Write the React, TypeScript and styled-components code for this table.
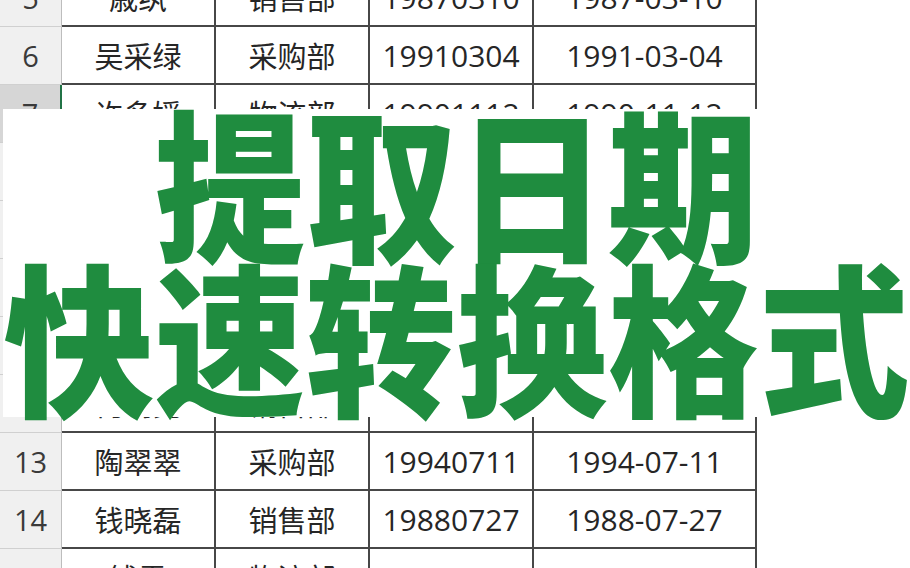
import React from "react";
import styled, { createGlobalStyle } from "styled-components";

const GlobalStyle = createGlobalStyle`
  html, body { margin: 0; padding: 0; background: #fff; overflow: hidden; }
  body { width: 910px; height: 568px; }
`;

const Stage = styled.div`
  position: relative;
  width: 910px;
  height: 568px;
  overflow: hidden;
  background: #fff;
`;

const Sheet = styled.div`
  margin-top: -31px;
  display: grid;
  grid-template-columns: 62px 154px 154px 164px 223px;
  grid-auto-rows: 58px;
  width: 757px;
`;

const RowHeader = styled.div<{ $active?: boolean }>`
  box-sizing: border-box;
  display: flex;
  align-items: center;
  justify-content: center;
  background: ${(p) => (p.$active ? "#d6d6d6" : "#f0f0f0")};
  border-bottom: 1px solid #d0d0d0;
  border-right: ${(p) => (p.$active ? "2px solid #217346" : "1px solid #bdbdbd")};
  font-family: "Open Sans", "Noto Sans", sans-serif;
  font-size: 29px;
  color: #3a3a3a;
`;

const Cell = styled.div<{ $num?: boolean }>`
  box-sizing: border-box;
  display: flex;
  align-items: center;
  justify-content: center;
  border-right: 2px solid #474747;
  border-bottom: 2px solid #474747;
  font-family: ${(p) => (p.$num ? `"Open Sans", "Noto Sans", sans-serif` : `"Noto Sans CJK SC", sans-serif`)};
  font-size: ${(p) => (p.$num ? "30px" : "29px")};
  color: #262626;
  white-space: nowrap;
`;

const Banner = styled.div`
  position: absolute;
  top: 109px;
  left: 3px;
  right: 0;
  height: 308px;
  box-sizing: border-box;
  padding-bottom: 14px;
  background: #fff;
  display: flex;
  flex-direction: column;
  align-items: center;
  justify-content: center;
`;

const TitleLine = styled.div`
  font-family: "Noto Sans CJK SC", sans-serif;
  font-weight: 900;
  font-size: 151px;
  line-height: 154px;
  color: #1f8c3f;
  white-space: nowrap;
  transform: scaleY(1.08);
`;

type Row = [number, string, string, string, string];

const rows: Row[] = [
  [5, "戚纨", "销售部", "19870310", "1987-03-10"],
  [6, "吴采绿", "采购部", "19910304", "1991-03-04"],
  [7, "许多媛", "物流部", "19901112", "1990-11-12"],
  [8, "林向阳", "销售部", "19850623", "1985-06-23"],
  [9, "周海燕", "财务部", "19920115", "1992-01-15"],
  [10, "郑子墨", "采购部", "19890908", "1989-09-08"],
  [11, "孙雨桐", "物流部", "19930402", "1993-04-02"],
  [12, "何明亮", "销售部", "19861219", "1986-12-19"],
  [13, "陶翠翠", "采购部", "19940711", "1994-07-11"],
  [14, "钱晓磊", "销售部", "19880727", "1988-07-27"],
  [15, "钱霞", "物流部", "19690311", "1969-03-11"],
];

export default function App() {
  return (
    <Stage>
      <GlobalStyle />
      <Sheet>
        {rows.map(([n, name, dept, raw, date]) => (
          <React.Fragment key={n}>
            <RowHeader $active={n === 7}>{n}</RowHeader>
            <Cell>{name}</Cell>
            <Cell>{dept}</Cell>
            <Cell $num>{raw}</Cell>
            <Cell $num>{date}</Cell>
          </React.Fragment>
        ))}
      </Sheet>
      <Banner>
        <TitleLine>提取日期</TitleLine>
        <TitleLine>快速转换格式</TitleLine>
      </Banner>
    </Stage>
  );
}
